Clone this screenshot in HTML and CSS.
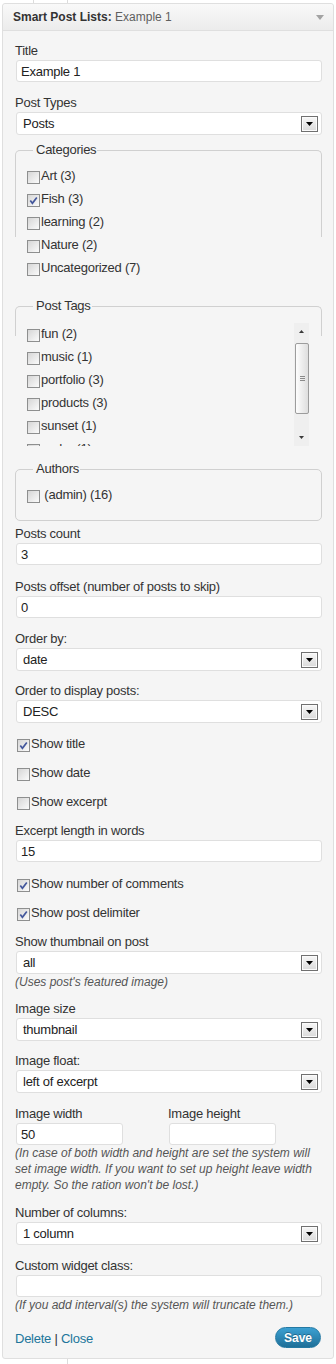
FILE: index.html
```html
<!DOCTYPE html>
<html lang="en">
<head>
<meta charset="utf-8">
<title>Smart Post Lists widget</title>
<link rel="stylesheet" href="styles.css">
</head>
<body>
<div class="widget">
  <div class="widget-top">
    <h4 class="widget-title">Smart Post Lists:<span class="in-title"> Example 1</span></h4>
    <svg class="toggle" width="8" height="5" viewBox="0 0 8 5"><polygon points="0,0 8,0 4,5"/></svg>
  </div>
  <div class="widget-inside">
    <div class="field mt-11">
      <label class="lbl">Title</label>
      <input class="text" type="text" value="Example 1">
    </div>
    <div class="field mt-12">
      <label class="lbl">Post Types</label>
      <div class="select"><span>Posts</span><span class="select-btn"><svg width="7" height="4" viewBox="0 0 7 4"><polygon points="0,0 7,0 3.5,4"/></svg></span></div>
    </div>

    <div class="group group-cats">
      <div class="legend">Categories</div>
      <div class="checks">
        <label class="check"><span class="box"></span>Art (3)</label>
        <label class="check"><span class="box"><svg width="9" height="9" viewBox="0 0 9 9"><path d="M1.3 4.6 L3.4 7.3 L7.8 1.4"/></svg></span>Fish (3)</label>
        <label class="check"><span class="box"></span>learning (2)</label>
        <label class="check"><span class="box"></span>Nature (2)</label>
        <label class="check"><span class="box"></span>Uncategorized (7)</label>
      </div>
    </div>

    <div class="group group-tags">
      <div class="legend">Post Tags</div>
      <div class="tag-scroll">
        <div class="tag-list">
          <label class="check"><span class="box"></span>fun (2)</label>
          <label class="check"><span class="box"></span>music (1)</label>
          <label class="check"><span class="box"></span>portfolio (3)</label>
          <label class="check"><span class="box"></span>products (3)</label>
          <label class="check"><span class="box"></span>sunset (1)</label>
          <label class="check"><span class="box"></span>under (1)</label>
        </div>
        <div class="sb">
          <div class="sb-btn"><svg width="5" height="3" viewBox="0 0 5 3"><polygon points="0,3 5,3 2.5,0"/></svg></div>
          <div class="sb-thumb"><span></span><span></span><span></span></div>
          <div class="sb-track"></div>
          <div class="sb-btn"><svg width="5" height="3" viewBox="0 0 5 3"><polygon points="0,0 5,0 2.5,3"/></svg></div>
        </div>
      </div>
    </div>

    <div class="group group-authors">
      <div class="legend">Authors</div>
      <div class="checks">
        <label class="check"><span class="box"></span>&nbsp;(admin) (16)</label>
      </div>
    </div>

    <div class="field mt-4">
      <label class="lbl">Posts count</label>
      <input class="text" type="text" value="3">
    </div>
    <div class="field mt-13">
      <label class="lbl">Posts offset (number of posts to skip)</label>
      <input class="text" type="text" value="0">
    </div>
    <div class="field mt-12">
      <label class="lbl">Order by:</label>
      <div class="select"><span>date</span><span class="select-btn"><svg width="7" height="4" viewBox="0 0 7 4"><polygon points="0,0 7,0 3.5,4"/></svg></span></div>
    </div>
    <div class="field mt-11">
      <label class="lbl">Order to display posts:</label>
      <div class="select"><span>DESC</span><span class="select-btn"><svg width="7" height="4" viewBox="0 0 7 4"><polygon points="0,0 7,0 3.5,4"/></svg></span></div>
    </div>

    <label class="check solo mt-12"><span class="box"><svg width="9" height="9" viewBox="0 0 9 9"><path d="M1.3 4.6 L3.4 7.3 L7.8 1.4"/></svg></span>Show title</label>
    <label class="check solo mt-11"><span class="box"></span>Show date</label>
    <label class="check solo mt-11"><span class="box"></span>Show excerpt</label>

    <div class="field mt-11">
      <label class="lbl">Excerpt length in words</label>
      <input class="text" type="text" value="15">
    </div>

    <label class="check solo mt-13"><span class="box"><svg width="9" height="9" viewBox="0 0 9 9"><path d="M1.3 4.6 L3.4 7.3 L7.8 1.4"/></svg></span>Show number of comments</label>
    <label class="check solo mt-11"><span class="box"><svg width="9" height="9" viewBox="0 0 9 9"><path d="M1.3 4.6 L3.4 7.3 L7.8 1.4"/></svg></span>Show post delimiter</label>

    <div class="field mt-11">
      <label class="lbl">Show thumbnail on post</label>
      <div class="select"><span>all</span><span class="select-btn"><svg width="7" height="4" viewBox="0 0 7 4"><polygon points="0,0 7,0 3.5,4"/></svg></span></div>
      <p class="note">(Uses post's featured image)</p>
    </div>
    <div class="field mt-10">
      <label class="lbl">Image size</label>
      <div class="select"><span>thumbnail</span><span class="select-btn"><svg width="7" height="4" viewBox="0 0 7 4"><polygon points="0,0 7,0 3.5,4"/></svg></span></div>
    </div>
    <div class="field mt-11">
      <label class="lbl">Image float:</label>
      <div class="select"><span>left of excerpt</span><span class="select-btn"><svg width="7" height="4" viewBox="0 0 7 4"><polygon points="0,0 7,0 3.5,4"/></svg></span></div>
    </div>

    <div class="field mt-12">
      <div class="dims">
        <div>
          <label class="lbl">Image width</label>
          <input class="text narrow" type="text" value="50">
        </div>
        <div>
          <label class="lbl">Image height</label>
          <input class="text narrow" type="text" value="">
        </div>
      </div>
      <p class="note mt-1">(In case of both width and height are set the system will set image width. If you want to set up height leave width empty. So the ration won't be lost.)</p>
    </div>

    <div class="field mt-11">
      <label class="lbl">Number of columns:</label>
      <div class="select"><span>1 column</span><span class="select-btn"><svg width="7" height="4" viewBox="0 0 7 4"><polygon points="0,0 7,0 3.5,4"/></svg></span></div>
    </div>
    <div class="field mt-12">
      <label class="lbl">Custom widget class:</label>
      <input class="text" type="text" value="">
      <p class="note mt-1">(If you add interval(s) the system will truncate them.)</p>
    </div>

    <div class="footer">
      <div class="links"><a href="#">Delete</a> | <a href="#">Close</a></div>
      <button class="save" type="button">Save</button>
    </div>
  </div>
</div>
</body>
</html>
```
FILE: styles.css
```css
* { box-sizing: border-box; }

html, body { margin: 0; padding: 0; }

body {
  padding-top: 3px;
  min-height: 1364px;
  font-family: "Liberation Sans", Arial, sans-serif;
  font-size: 13px;
  letter-spacing: -0.25px;
  color: #333;
  background:
    linear-gradient(#dcdcdc, #dcdcdc) 33px 0 / 1px 3px no-repeat,
    linear-gradient(#dcdcdc, #dcdcdc) 67px 0 / 1px 100% no-repeat,
    #fff;
}

.widget {
  margin-left: 2px;
  width: 332px;
  border: 1px solid #dfdfdf;
  border-radius: 3px;
  background: #f5f5f5;
}

.widget-top {
  height: 27px;
  display: flex;
  align-items: center;
  justify-content: space-between;
  padding: 0 9px 0 10px;
  background: linear-gradient(#f9f9f9, #ececec);
  border-bottom: 1px solid #dfdfdf;
  border-radius: 3px 3px 0 0;
}

.widget-title {
  margin: 0;
  font-size: 12px;
  font-weight: bold;
  letter-spacing: 0;
  color: #333;
}

.in-title {
  font-weight: normal;
  color: #5f5f5f;
}

.toggle { fill: #a3a3a3; }

.widget-inside {
  padding: 0 11px 10px 12px;
}

.mt-1 { margin-top: 1px; }
.mt-4 { margin-top: 4px; }
.mt-10 { margin-top: 10px; }
.mt-11 { margin-top: 11px; }
.mt-12 { margin-top: 12px; }
.mt-13 { margin-top: 13px; }

.lbl {
  display: block;
  line-height: 18px;
}

.text {
  display: block;
  width: 306px;
  height: 22px;
  margin: 0 0 0 1px;
  padding: 0 4px;
  border: 1px solid #dfdfdf;
  border-radius: 3px;
  background: #fff;
  font-family: inherit;
  font-size: 13px;
  letter-spacing: inherit;
  color: #222;
  outline: none;
}

.text.narrow { width: 107px; }

.select {
  display: flex;
  align-items: center;
  justify-content: space-between;
  width: 306px;
  height: 23px;
  margin-left: 1px;
  padding: 0 3px 0 6px;
  border: 1px solid #dfdfdf;
  border-radius: 3px;
  background: #fff;
  color: #222;
}

.select-btn {
  display: flex;
  align-items: center;
  justify-content: center;
  width: 17px;
  height: 16px;
  border: 1px solid #707070;
  background: linear-gradient(#f7f7f7, #dadada);
  box-shadow: inset 0 0 0 1px #fbfbfb;
}

.select-btn svg { fill: #000; }

/* fieldset-like groups */
.group {
  position: relative;
}

.group::before {
  content: "";
  position: absolute;
  left: 0;
  right: 0;
  top: 9px;
  border: 1px solid #d0d0d0;
  border-bottom: 0;
  border-radius: 5px 5px 0 0;
}

.group-cats { margin-top: 6px; }
.group-cats::before { height: 86px; }

.group-tags { margin-top: 20px; }
.group-tags::before { height: 29px; }

.group-authors { margin-top: 14px; }
.group-authors::before {
  bottom: 0;
  border-bottom: 1px solid #d0d0d0;
  border-radius: 5px;
}

.legend {
  position: relative;
  width: max-content;
  margin-left: 18px;
  padding: 0 1px 0 3px;
  line-height: 18px;
  background: #f5f5f5;
}

.checks {
  display: flex;
  flex-direction: column;
  gap: 5px;
  padding: 8px 0 0 12px;
}

.group-authors .checks { padding-bottom: 17px; }

.check {
  display: flex;
  align-items: flex-start;
  flex: none;
  line-height: 18px;
}

.check.solo { margin-left: 2px; }

.box {
  display: flex;
  align-items: center;
  justify-content: center;
  flex: none;
  width: 13px;
  height: 13px;
  margin: 4px 1px 0 0;
  border: 1px solid #8e8f8f;
  background: linear-gradient(135deg, #d6d6d6, #fbfbfb);
}

.box svg path {
  fill: none;
  stroke: #43579c;
  stroke-width: 1.7;
}

/* post tags scroll list */
.tag-scroll {
  display: flex;
  height: 123px;
  margin-top: 8px;
  padding: 0 13px 0 12px;
}

.tag-list {
  flex: 1;
  display: flex;
  flex-direction: column;
  gap: 5px;
  padding-top: 2px;
  overflow: hidden;
}

.sb {
  display: flex;
  flex-direction: column;
  width: 15px;
  background: #efefef;
}

.sb-btn {
  display: flex;
  align-items: center;
  justify-content: center;
  height: 17px;
  flex: none;
}

.sb-btn svg { fill: #3a3a3a; }

.sb-thumb {
  display: flex;
  flex-direction: column;
  align-items: center;
  justify-content: center;
  gap: 1px;
  height: 71px;
  margin: 3px 0 0 1px;
  width: 14px;
  border: 1px solid #9c9c9c;
  border-radius: 2px;
  background: linear-gradient(to right, #fdfdfd, #dedede);
}

.sb-thumb span {
  display: block;
  width: 5px;
  height: 1px;
  background: #8a8a8a;
}

.sb-track { flex: 1; }

.note {
  margin: 0;
  font-size: 12px;
  font-style: italic;
  line-height: 16px;
  letter-spacing: 0;
  color: #555;
}

.dims {
  display: grid;
  grid-template-columns: 153px 153px;
}

.footer {
  display: flex;
  align-items: flex-start;
  justify-content: space-between;
  margin-top: 14px;
}

.links {
  margin-top: 3px;
  line-height: 18px;
  color: #333;
}

.links a {
  color: #21759b;
  text-decoration: none;
}

.save {
  width: 46px;
  height: 21px;
  margin: 0 1px 0 0;
  padding: 0;
  border: 1px solid #2479a3;
  border-radius: 11px;
  background: linear-gradient(#3ba0d2, #1f6f98);
  color: #fff;
  font-family: inherit;
  font-size: 12px;
  font-weight: bold;
  letter-spacing: 0;
  text-shadow: 0 -1px 0 rgba(0, 0, 0, 0.3);
}
```
